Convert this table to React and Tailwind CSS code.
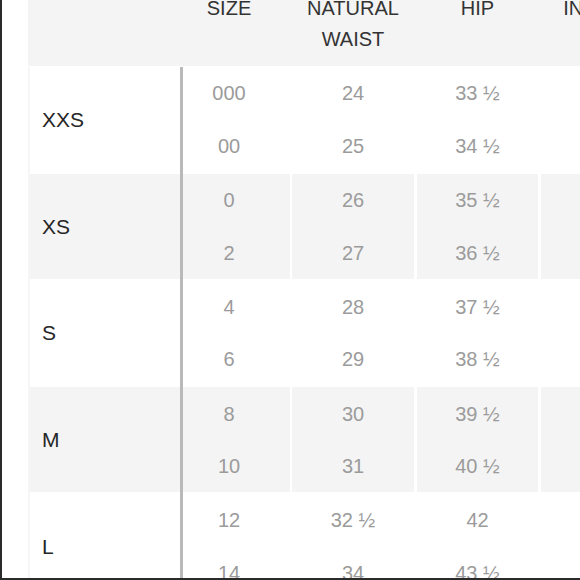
const groups = [
  { label: 'XXS', rows: [['000', '24', '33 ½'], ['00', '25', '34 ½']] },
  { label: 'XS', rows: [['0', '26', '35 ½'], ['2', '27', '36 ½']] },
  { label: 'S', rows: [['4', '28', '37 ½'], ['6', '29', '38 ½']] },
  { label: 'M', rows: [['8', '30', '39 ½'], ['10', '31', '40 ½']] },
  { label: 'L', rows: [['12', '32 ½', '42'], ['14', '34', '43 ½']] },
];

const Cell = ({ values, shaded, className }) => (
  <div className={`flex flex-col ${shaded ? 'bg-[#f4f4f4]' : 'bg-white'} ${className}`}>
    {values.map((v, i) => (
      <div key={i} className="flex-1 flex items-center justify-center">
        {v}
      </div>
    ))}
  </div>
);

export default function App() {
  return (
    <div
      className="w-[580px] h-[580px] overflow-hidden bg-white border-l-2 border-b-2 border-[#2b2b2b] text-[20px]"
      style={{ fontFamily: '"Liberation Sans", Arial, sans-serif' }}
    >
      <div className="ml-[26px] w-[700px]">
        {/* CABECERA */}
        <div className="flex h-[66px] bg-[#f4f4f4] text-[#333] leading-[31px] text-center">
          <div className="w-[155px] shrink-0" />
          <div className="w-[107px] shrink-0 pr-[15px] -mt-[7px]">SIZE</div>
          <div className="w-[2px] shrink-0" />
          <div className="w-[122px] shrink-0 -mt-[7px]">
            NATURAL
            <br />
            WAIST
          </div>
          <div className="w-[3px] shrink-0" />
          <div className="w-[121px] shrink-0 -mt-[7px]">HIP</div>
          <div className="w-[3px] shrink-0" />
          <div className="w-[121px] shrink-0 -mt-[7px]">INSEAM</div>
        </div>

        {/* FILAS */}
        <div className="flex mt-[1px]">
          <div className="w-[2px] shrink-0 bg-[#f6f6f6]" />
          <div className="w-[150px] shrink-0 flex flex-col gap-y-[1.75px]">
            {groups.map((g, i) => (
              <div
                key={g.label}
                className={`h-[105px] shrink-0 flex items-center pl-[12px] text-[21px] text-[#262626] ${
                  i % 2 === 1 ? 'bg-[#f4f4f4]' : 'bg-white'
                }`}
              >
                {g.label}
              </div>
            ))}
          </div>
          <div className="w-[3px] shrink-0 bg-[#b9b9b9] h-[560px]" />
          <div className="flex flex-col gap-y-[1.75px] text-[#9b9b9b]">
            {groups.map((g, i) => {
              const shaded = i % 2 === 1;
              return (
                <div key={g.label} className="h-[105px] shrink-0 flex">
                  <Cell
                    shaded={shaded}
                    className="w-[107px] pr-[15px]"
                    values={g.rows.map(r => r[0])}
                  />
                  <div className="w-[2px]" />
                  <Cell shaded={shaded} className="w-[122px]" values={g.rows.map(r => r[1])} />
                  <div className="w-[3px]" />
                  <Cell shaded={shaded} className="w-[121px]" values={g.rows.map(r => r[2])} />
                  <div className="w-[3px]" />
                  <Cell shaded={shaded} className="w-[121px]" values={['', '']} />
                </div>
              );
            })}
          </div>
        </div>
      </div>
    </div>
  );
}
